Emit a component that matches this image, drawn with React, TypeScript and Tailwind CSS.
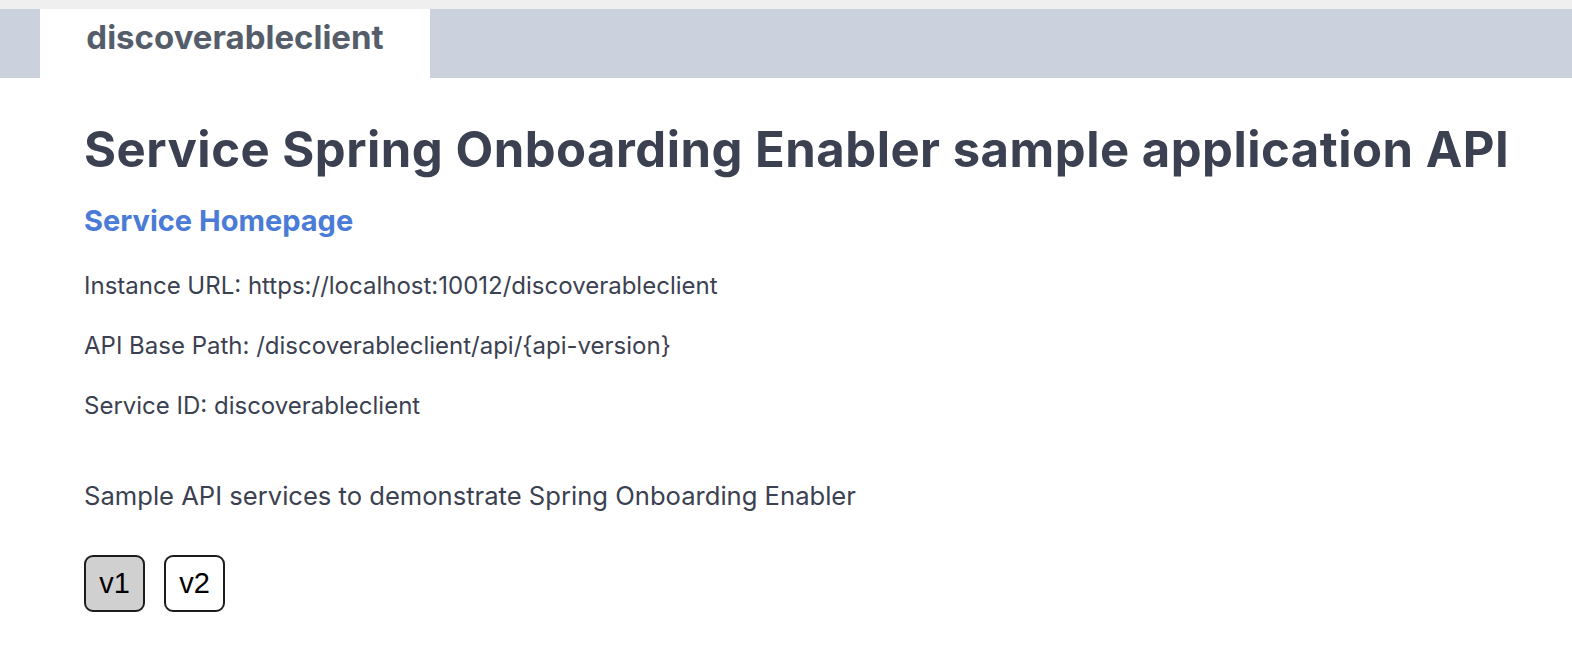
import React from 'react';

const details = [
  "Instance URL: https://localhost:10012/discoverableclient",
  "API Base Path: /discoverableclient/api/{api-version}",
  "Service ID: discoverableclient",
];

export default function App() {
  return (
    <div className="min-h-screen w-full bg-white font-['Inter',sans-serif] text-[#3b4151]">
      <div className="h-[9px] bg-[#efefef]" />
      <div className="h-[69px] bg-[#cbd2de] pl-[40px] flex">
        <div className="w-[390px] bg-white flex items-start justify-center pt-[8px]">
          <span className="text-[33px] font-bold text-[#555d6b] leading-[40px]">discoverableclient</span>
        </div>
      </div>

      <div className="pl-[84px] pr-[40px]">
        <h1 className="mt-[42px] text-[49px] font-bold leading-[60px] text-[#3b4151] tracking-[0.5px] whitespace-nowrap">
          Service Spring Onboarding Enabler sample application API
        </h1>
        <a href="#" className="block mt-[23px] text-[29px] font-bold text-[#4a7bd6] leading-[36px]">
          Service Homepage
        </a>
        <div className="mt-[33px] flex flex-col gap-[32px]">
          {details.map((line) => (
            <p key={line} className="text-[24px] leading-[28px]">{line}</p>
          ))}
        </div>
        <p className="mt-[62px] text-[25.6px] leading-[28px]">
          Sample API services to demonstrate Spring Onboarding Enabler
        </p>
        <div className="mt-[45px] flex gap-[19px]">
          <button className="w-[61px] h-[57px] rounded-[9px] border-2 border-[#1c1c1c] bg-[#d0d0d0] text-[29px] text-black font-['Liberation_Sans',sans-serif]">
            v1
          </button>
          <button className="w-[61px] h-[57px] rounded-[9px] border-2 border-[#1c1c1c] bg-white text-[29px] text-black font-['Liberation_Sans',sans-serif]">
            v2
          </button>
        </div>
      </div>
    </div>
  );
}
